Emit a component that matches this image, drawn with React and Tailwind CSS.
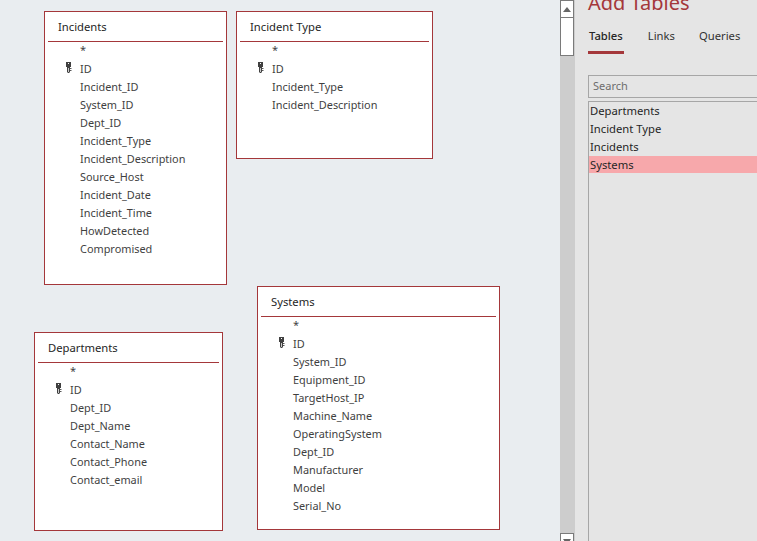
const FONT = "font-['Noto_Sans','Open_Sans',sans-serif]";

function Key() {
  return (
    <svg width="6" height="11" viewBox="0 0 6 11" className="absolute left-[-14px] top-[-2px]">
      <path d="M0 0h5v5H4v5L3 11H2L1 10V5H0z" fill="#404040" />
      <path d="M2 1h1v1H2z" fill="#fff" />
      <path d="M2 6h1v4H2z" fill="#c8c8c8" />
      <path d="M4 6h1.5v1H4zM4 8h1.5v1H4z" fill="#555" />
    </svg>
  );
}

function TableCard({ name, fields, left, top, width, height, titleLeft, fieldLeft }) {
  return (
    <div
      className="absolute bg-white border border-[#a4373a] box-border"
      style={{ left, top, width, height }}
    >
      <div className="mx-[3px] h-[30px] border-b border-[#a4373a] flex items-end pb-[6px]">
        <span className="text-[11.25px] leading-[16px] text-[#262626]" style={{ marginLeft: titleLeft }}>
          {name}
        </span>
      </div>
      <div className="flex flex-col" style={{ marginLeft: fieldLeft }}>
        <div className="h-[19px] leading-[18px] text-[11px] text-[#444] mt-[-1px]">*</div>
        {fields.map((f) => (
          <div key={f} className="relative h-[18px] leading-[18px] text-[10.9px] text-[#3f3f3f]">
            {f === "ID" && <span className="absolute left-0 top-[4px]"><Key /></span>}
            {f}
          </div>
        ))}
      </div>
    </div>
  );
}

const tables = [
  { name: "Incidents", left: 44, top: 11, width: 183, height: 274, titleLeft: 10, fieldLeft: 35,
    fields: ["ID","Incident_ID","System_ID","Dept_ID","Incident_Type","Incident_Description","Source_Host","Incident_Date","Incident_Time","HowDetected","Compromised"] },
  { name: "Incident Type", left: 236, top: 11, width: 197, height: 148, titleLeft: 10, fieldLeft: 35,
    fields: ["ID","Incident_Type","Incident_Description"] },
  { name: "Departments", left: 34, top: 332, width: 189, height: 199, titleLeft: 10, fieldLeft: 35,
    fields: ["ID","Dept_ID","Dept_Name","Contact_Name","Contact_Phone","Contact_email"] },
  { name: "Systems", left: 257, top: 286, width: 243, height: 244, titleLeft: 10, fieldLeft: 35,
    fields: ["ID","System_ID","Equipment_ID","TargetHost_IP","Machine_Name","OperatingSystem","Dept_ID","Manufacturer","Model","Serial_No"] },
];

export default function App() {
  return (
    <div className={`${FONT} w-[757px] h-[541px] flex overflow-hidden bg-[#e9edf0]`}>
      <div className="relative w-[560px] shrink-0">
        {tables.map((t) => <TableCard key={t.name} {...t} />)}
      </div>

      <div className="w-[15px] shrink-0 bg-[#cdcdcd] flex flex-col justify-between">
        <div className="w-[14px] h-[56px] bg-white border border-[#7a7a7a] flex flex-col">
          <div className="h-[17px] border-b border-[#7a7a7a] flex items-center justify-center">
            <svg width="8" height="5" viewBox="0 0 8 5"><path d="M4 0l4 5H0z" fill="#666" /></svg>
          </div>
        </div>
        <div className="w-[14px] h-[8px] bg-white border border-b-0 border-[#7a7a7a] flex justify-center pt-[5px]">
          <svg width="8" height="3" viewBox="0 0 8 3"><path d="M0 0h8L6 3H2z" fill="#666" /></svg>
        </div>
      </div>

      <div className="flex-1 bg-[#e5e5e5] flex flex-col pl-[13px] min-w-0">
        <div className="h-[17px] relative">
          <div className="text-[20px] leading-[26px] text-[#a4373a] mt-[-10px] whitespace-nowrap">Add Tables</div>
        </div>
        <div className="flex gap-[24px] mt-[11px] h-[36px] text-[11.25px] leading-[16px] text-[#333]">
          <div className="relative px-[1px] h-[22px] font-medium text-[#262626]">
            Tables
            <div className="absolute left-0 right-0 top-[23px] h-[3px] bg-[#a4373a]" />
          </div>
          <div>Links</div>
          <div>Queries</div>
        </div>
        <div className="h-[23px] mt-[11px] border border-r-0 border-[#a6a6a6] flex items-center pl-[4px] text-[11px] text-[#6d6d6d]">
          Search
        </div>
        <div className="flex-1 mt-[3px] border-l border-t border-[#a6a6a6] text-[11.25px] text-[#262626]">
          {["Departments", "Incident Type", "Incidents"].map((n) => (
            <div key={n} className="h-[18px] leading-[18px] pl-[1px]">{n}</div>
          ))}
          <div className="h-[17px] leading-[17px] pl-[1px] bg-[#f7a8ab]">Systems</div>
        </div>
      </div>
    </div>
  );
}
